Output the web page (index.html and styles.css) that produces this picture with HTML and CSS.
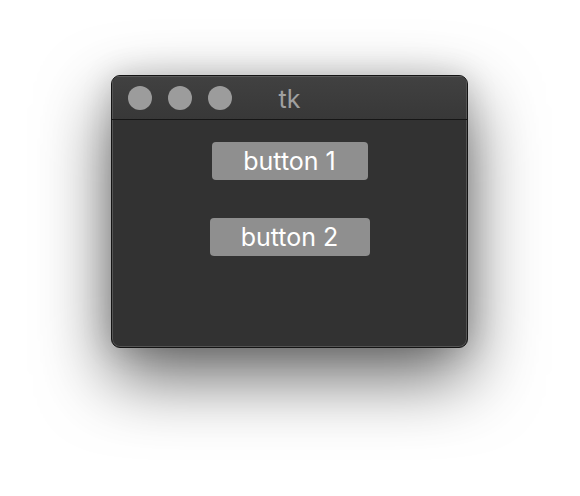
FILE: index.html
```html
<!DOCTYPE html>
<html>
<head>
<meta charset="utf-8">
<link rel="stylesheet" href="styles.css">
</head>
<body>
<div class="stage">
  <div class="window">
    <div class="titlebar">
      <div class="lights">
        <span class="light"></span>
        <span class="light"></span>
        <span class="light"></span>
      </div>
      <div class="title">tk</div>
    </div>
    <div class="content">
      <div class="btn btn1">button 1</div>
      <div class="btn btn2">button 2</div>
    </div>
  </div>
</div>
</body>
</html>
```
FILE: styles.css
```css
html, body {
  margin: 0;
  padding: 0;
  background: #ffffff;
}
.stage {
  width: 580px;
  height: 496px;
  padding: 75px 0 0 111px;
  box-sizing: border-box;
  overflow: hidden;
  background: #ffffff;
}
.window {
  width: 357px;
  height: 273px;
  box-sizing: border-box;
  background: #323232;
  border: 1px solid #141414;
  border-radius: 9px;
  box-shadow: inset 0 0 0 1px #545454, 0 28px 70px rgba(0,0,0,0.62), 0 0 30px rgba(0,0,0,0.15);
  display: flex;
  flex-direction: column;
  overflow: hidden;
  font-family: Inter, "Liberation Sans", Arial, sans-serif;
}
.titlebar {
  height: 43px;
  flex: none;
  position: relative;
  background: linear-gradient(#414141, #383838);
  border-bottom: 1px solid #161616;
  box-shadow: inset 0 1px 0 #5a5a5a, inset 1px 0 0 #545454, inset -1px 0 0 #545454;
  display: flex;
  align-items: center;
}
.lights {
  display: flex;
  gap: 16px;
  padding-left: 16px;
}
.light {
  width: 24px;
  height: 24px;
  border-radius: 50%;
  background: #9c9c9c;
}
.title {
  position: absolute;
  left: 0;
  right: 0;
  top: 8px;
  text-align: center;
  color: #a0a0a0;
  font-size: 25px;
  line-height: 30px;
}
.content {
  flex: 1;
  display: flex;
  flex-direction: column;
  align-items: center;
  padding-top: 22px;
  gap: 38px;
}
.btn {
  height: 38px;
  box-sizing: border-box;
  background: #8f8f8f;
  border-radius: 4px;
  color: #ffffff;
  font-size: 25px;
  line-height: 38px;
  text-align: center;
}
.btn1 { width: 156px; }
.btn2 { width: 160px; }
```
